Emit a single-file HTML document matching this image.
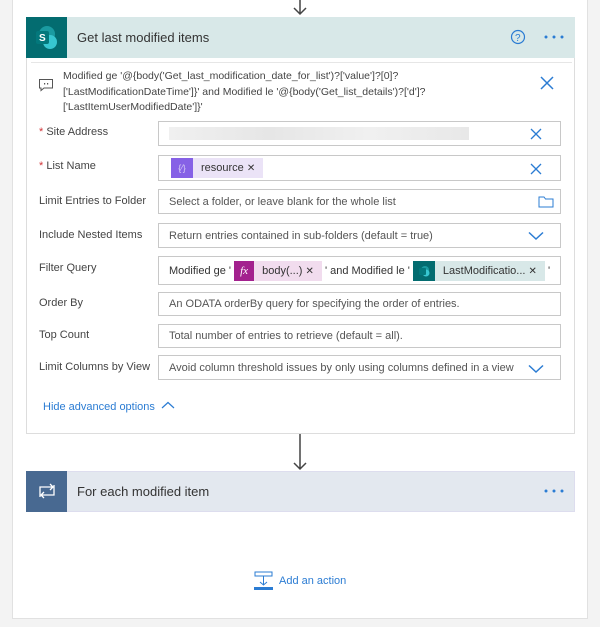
<!DOCTYPE html><html><head><style>
*{box-sizing:border-box;margin:0;padding:0}
body{width:600px;height:627px;background:#f3f3f3;font-family:"Liberation Sans",sans-serif;position:relative;overflow:hidden;color:#333}
.a{position:absolute}
.panel{left:12px;top:0;width:576px;height:619px;background:#fff;border:1px solid #e1e1e1;border-top:none}
.card{left:26px;top:17px;width:549px;height:417px;border:1px solid #ddd;background:#fff}
.lab{left:39px;font-size:11px;color:#444}
.inp{left:158px;width:403px;border:1px solid #c8c8c8;background:#fff;font-size:11px;color:#555;padding-left:10px;display:flex;align-items:center}
.star{color:#d13438}
</style></head><body>
<div class="a panel"></div>
<svg class="a" style="left:292px;top:0" width="16" height="16"><path d="M8 0V14M2 8L8 14L14 8" stroke="#444" stroke-width="1.5" fill="none"/></svg>
<div class="a card"></div>
<div class="a" style="left:26px;top:17px;width:549px;height:41px;background:#d8e8e8"></div>
<div class="a" style="left:26px;top:17px;width:41px;height:41px;background:#036c70"></div>
<svg class="a" style="left:33px;top:24px" width="28" height="28"><circle cx="14" cy="10" r="8" fill="#1a9ba1"/><circle cx="17" cy="18" r="7" fill="#37c6d0"/><rect x="3" y="7" width="13" height="13" rx="2" fill="#03787c"/><text x="6" y="17" font-size="10" fill="#fff" font-weight="bold" font-family="Liberation Sans">S</text></svg>
<div class="a" style="left:77px;top:30px;font-size:13px;color:#333">Get last modified items</div>
<svg class="a" style="left:510px;top:29px" width="16" height="16"><circle cx="8" cy="8" r="6.5" stroke="#2b7cd3" fill="none" stroke-width="1.2"/><text x="5" y="12" font-size="10" fill="#2b7cd3" font-family="Liberation Sans">?</text></svg>
<svg class="a" style="left:543px;top:34px" width="22" height="6"><circle cx="3" cy="3" r="1.5" fill="#2b7cd3"/><circle cx="11" cy="3" r="1.5" fill="#2b7cd3"/><circle cx="19" cy="3" r="1.5" fill="#2b7cd3"/></svg>
<div class="a" style="left:31px;top:62px;width:541px;height:1px;background:#e6e6e6"></div>
<svg class="a" style="left:38px;top:78px" width="16" height="14"><path d="M1.5 1.5H14.5V10H6L3 12.5V10H1.5Z" stroke="#555" fill="none"/><rect x="6" y="5" width="1.2" height="1.5" fill="#555"/><rect x="9" y="5" width="1.2" height="1.5" fill="#555"/></svg>
<div class="a" style="left:63px;top:69px;font-size:10.5px;line-height:15.5px;color:#444;width:420px">Modified ge '@{body('Get_last_modification_date_for_list')?['value']?[0]?<br>['LastModificationDateTime']}' and Modified le '@{body('Get_list_details')?['d']?<br>['LastItemUserModifiedDate']}'</div>
<svg class="a" style="left:540px;top:76px" width="14" height="14"><path d="M1 1L13 13M13 1L1 13" stroke="#2b7cd3" stroke-width="1.5"/></svg>

<div class="a lab" style="top:126px"><span class="star">*</span> Site Address</div>
<div class="a inp" style="top:121px;height:25px"><div style="width:300px;height:13px;background:linear-gradient(90deg,#f0f0f0,#e6e6e6,#f0f0f0,#e8e8e8)"></div></div>
<svg class="a" style="left:530px;top:128px" width="12" height="12"><path d="M1 1L11 11M11 1L1 11" stroke="#2b7cd3" stroke-width="1.3"/></svg>

<div class="a lab" style="top:160px"><span class="star">*</span> List Name</div>
<div class="a inp" style="top:155px;height:26px;padding-left:12px"><span style="display:flex;height:20px;background:#ebe3f7;align-items:center"><span style="width:22px;height:20px;background:#8661e6;color:#d8ccf5;font-size:9px;display:flex;align-items:center;justify-content:center">{⁄}</span><span style="padding:0 8px;color:#333">resource <span style="font-size:10px">✕</span></span></span></div>
<svg class="a" style="left:530px;top:163px" width="12" height="12"><path d="M1 1L11 11M11 1L1 11" stroke="#2b7cd3" stroke-width="1.3"/></svg>

<div class="a lab" style="top:195px">Limit Entries to Folder</div>
<div class="a inp" style="top:189px;height:25px">Select a folder, or leave blank for the whole list</div>
<svg class="a" style="left:538px;top:195px" width="16" height="13"><path d="M1 2H6L7.5 4H15V12H1Z" stroke="#2b7cd3" fill="none"/></svg>

<div class="a lab" style="top:229px">Include Nested Items</div>
<div class="a inp" style="top:223px;height:25px">Return entries contained in sub-folders (default = true)</div>
<svg class="a" style="left:528px;top:231px" width="16" height="10"><path d="M1 1.5L8 8L15 1.5" stroke="#2b7cd3" stroke-width="1.5" fill="none"/></svg>

<div class="a lab" style="top:262px">Filter Query</div>
<div class="a inp" style="top:256px;height:29px;color:#333">Modified ge '&nbsp;<span style="display:flex;height:20px;background:#f1dcee;align-items:center"><span style="width:20px;height:20px;background:#a3218e;color:#fff;font-style:italic;font-family:'Liberation Serif';display:flex;align-items:center;justify-content:center">fx</span><span style="padding:0 8px">body(...) <span style="font-size:10px">✕</span></span></span>&nbsp;' and Modified le '&nbsp;<span style="display:flex;height:20px;background:#d8e8e8;align-items:center"><span style="width:22px;height:20px;background:#036c70;display:flex;align-items:center;justify-content:center"><svg width="14" height="12"><circle cx="8" cy="5" r="4" fill="#1a9ba1"/><circle cx="9" cy="8" r="3.5" fill="#37c6d0"/><rect x="2" y="3" width="7" height="7" rx="1" fill="#03787c"/></svg></span><span style="padding:0 8px">LastModificatio... <span style="font-size:10px">✕</span></span></span>&nbsp;'</div>

<div class="a lab" style="top:297px">Order By</div>
<div class="a inp" style="top:292px;height:24px">An ODATA orderBy query for specifying the order of entries.</div>
<div class="a lab" style="top:329px">Top Count</div>
<div class="a inp" style="top:324px;height:24px">Total number of entries to retrieve (default = all).</div>
<div class="a lab" style="top:361px">Limit Columns by View</div>
<div class="a inp" style="top:355px;height:25px">Avoid column threshold issues by only using columns defined in a view</div>
<svg class="a" style="left:528px;top:364px" width="16" height="10"><path d="M1 1.5L8 8L15 1.5" stroke="#2b7cd3" stroke-width="1.5" fill="none"/></svg>
<div class="a" style="left:43px;top:401px;font-size:11px;color:#2b7cd3">Hide advanced options <svg width="14" height="9" style="margin-left:3px"><path d="M1 7L7 1.5L13 7" stroke="#2b7cd3" stroke-width="1.2" fill="none"/></svg></div>

<svg class="a" style="left:292px;top:434px" width="16" height="38"><path d="M8 0V35M2 29L8 35L14 29" stroke="#444" stroke-width="1.5" fill="none"/></svg>
<div class="a" style="left:26px;top:471px;width:549px;height:41px;background:#e3e8ef;border:1px solid #dde"></div>
<div class="a" style="left:26px;top:471px;width:41px;height:41px;background:#486991"></div>
<svg class="a" style="left:37px;top:483px" width="20" height="16"><path d="M3 14V4H16M13 1L16 4L13 7M17 2V12H4M7 15L4 12L7 9" stroke="#fff" stroke-width="1.3" fill="none"/></svg>
<div class="a" style="left:77px;top:484px;font-size:13px;color:#333">For each modified item</div>
<svg class="a" style="left:543px;top:488px" width="22" height="6"><circle cx="3" cy="3" r="1.5" fill="#2b7cd3"/><circle cx="11" cy="3" r="1.5" fill="#2b7cd3"/><circle cx="19" cy="3" r="1.5" fill="#2b7cd3"/></svg>

<svg class="a" style="left:254px;top:571px" width="20" height="20"><rect x="1" y="1" width="17" height="4" stroke="#2b7cd3" fill="none"/><path d="M9.5 5V14M6 11L9.5 14L13 11" stroke="#2b7cd3" fill="none"/><rect x="0" y="16" width="19" height="3" fill="#2b7cd3"/></svg>
<div class="a" style="left:279px;top:575px;font-size:11px;color:#2b7cd3">Add an action</div>
</body></html>
